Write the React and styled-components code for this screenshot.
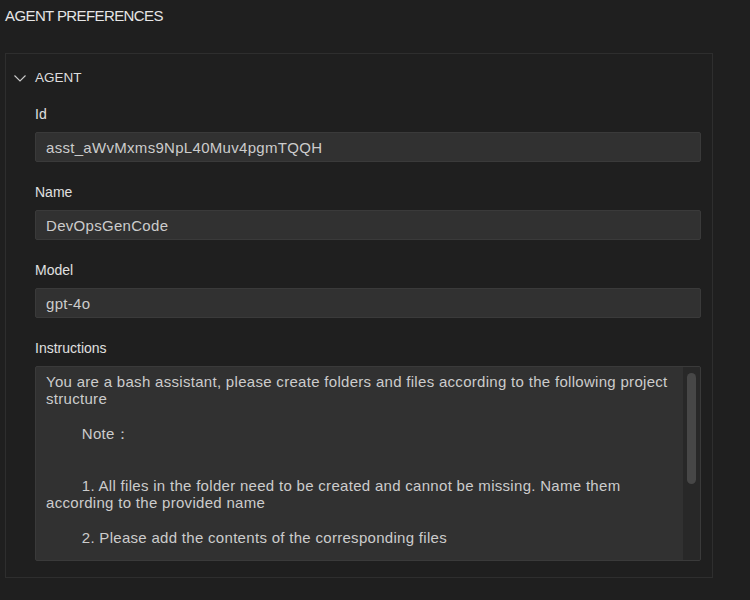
import styled, { createGlobalStyle } from "styled-components";

const GlobalStyle = createGlobalStyle`
	html, body {
		margin: 0;
		background: #1f1f1f;
	}
	body {
		font-family: "Liberation Sans", Arial, sans-serif;
		color: #cccccc;
	}
`;

const instructions = `You are a bash assistant, please create folders and files according to the following project structure

        Note：


        1. All files in the folder need to be created and cannot be missing. Name them according to the provided name

        2. Please add the contents of the corresponding files`;

const fields = [
	{ label: "Id", value: "asst_aWvMxms9NpL40Muv4pgmTQQH" },
	{ label: "Name", value: "DevOpsGenCode" },
	{ label: "Model", value: "gpt-4o" },
];

function ChevronDown() {
	return (
		<svg width="16" height="16" viewBox="0 0 16 16" fill="none">
			<path
				d="M2.5 5.5L8 11L13.5 5.5"
				stroke="#cccccc"
				strokeWidth="1.1"
			/>
		</svg>
	);
}

export default function App() {
	return (
		<Page>
			<GlobalStyle />
			<Title>AGENT PREFERENCES</Title>
			<Panel>
				<SectionHeader>
					<ChevronDown />
					<span>AGENT</span>
				</SectionHeader>
				<Fields>
					{fields.map((f) => (
						<Field key={f.label}>
							<Label>{f.label}</Label>
							<Input readOnly value={f.value} />
						</Field>
					))}
					<Field>
						<Label>Instructions</Label>
						<TextBox>
							<TextContent>{instructions}</TextContent>
							<ScrollTrack>
								<ScrollThumb />
							</ScrollTrack>
						</TextBox>
					</Field>
				</Fields>
			</Panel>
		</Page>
	);
}

const Page = styled.div`
	padding: 6px 37px 24px 5px;
	width: 750px;
	box-sizing: border-box;
`;

const Title = styled.h1`
	margin: 0;
	font-size: 15px;
	font-weight: 400;
	line-height: 20px;
	color: #e6e6e6;
	letter-spacing: -0.6px;
`;

const Panel = styled.section`
	margin-top: 27px;
	border: 1px solid #2e2e2e;
	padding: 12px 11px 16px 6px;
`;

const SectionHeader = styled.div`
	display: flex;
	align-items: center;
	gap: 7px;
	height: 22px;
	font-size: 13.5px;
	color: #dddddd;

	svg {
		margin-top: 1px;
	}
`;

const Fields = styled.div`
	display: flex;
	flex-direction: column;
	gap: 21px;
	padding-left: 23px;
	margin-top: 17px;
`;

const Field = styled.div`
	display: flex;
	flex-direction: column;
	gap: 9px;
`;

const Label = styled.label`
	font-size: 14px;
	line-height: 18px;
	color: #e0e0e0;
`;

const Input = styled.input`
	box-sizing: border-box;
	height: 30px;
	padding: 0 10px;
	background: #313131;
	border: 1px solid #3a3a3a;
	border-radius: 2px;
	color: #cccccc;
	font-family: "Liberation Sans", Arial, sans-serif;
	font-size: 15px;
	letter-spacing: 0.3px;
	outline: none;
`;

const TextBox = styled.div`
	box-sizing: border-box;
	display: flex;
	height: 195px;
	background: #313131;
	border: 1px solid #3a3a3a;
	border-radius: 2px;
	overflow: hidden;
`;

const TextContent = styled.div`
	flex: 1;
	padding: 6px 10px;
	color: #cccccc;
	font-size: 15px;
	line-height: 17.3px;
	letter-spacing: 0.3px;
	white-space: pre-wrap;
	overflow: hidden;
`;

const ScrollTrack = styled.div`
	width: 17px;
	flex-shrink: 0;
	background: #282828;
	display: flex;
	flex-direction: column;
	padding: 6px 4px 0;
	box-sizing: border-box;
`;

const ScrollThumb = styled.div`
	height: 111px;
	border-radius: 5px;
	background: #474747;
`;
